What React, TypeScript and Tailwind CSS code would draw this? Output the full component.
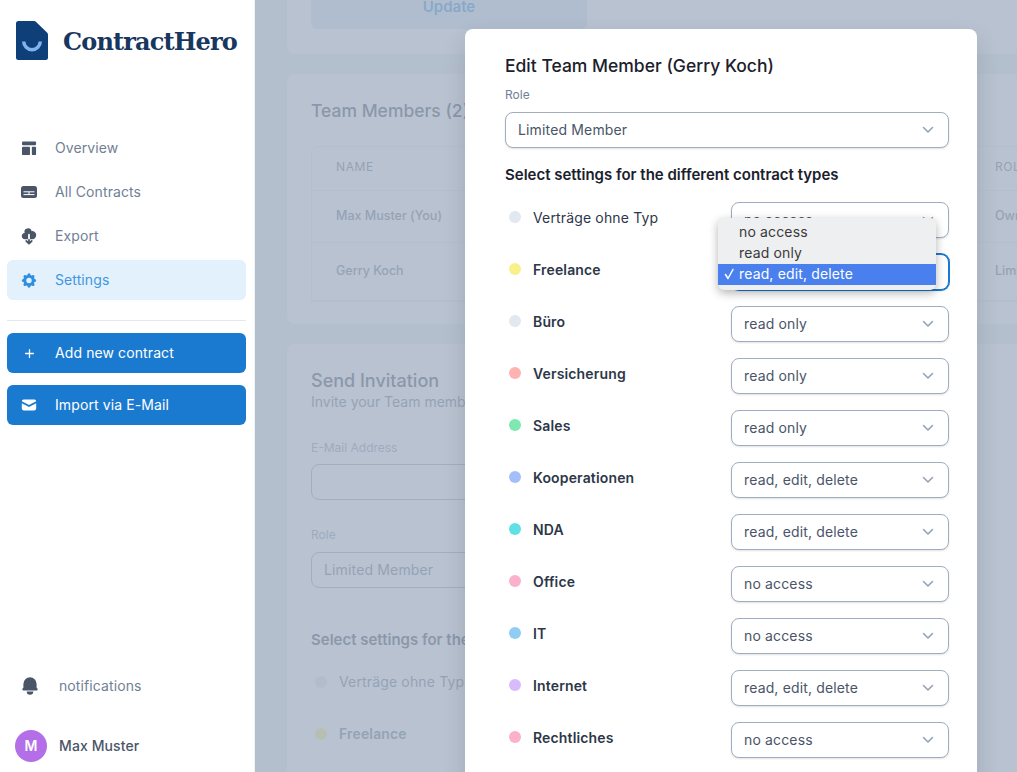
import { HiBell, HiCloudDownload, HiCog, HiMail, HiPlus } from "react-icons/hi";

const font = "font-['Inter',sans-serif]";

function Chevron() {
  return (
    <svg viewBox="0 0 20 20" className="w-[20px] h-[20px] text-[#94a3b8]" fill="none" stroke="currentColor" strokeWidth="1.6" strokeLinecap="round" strokeLinejoin="round">
      <path d="M5.5 7.5L10 12l4.5-4.5" />
    </svg>
  );
}

function Select({ value, focused, w }: { value: string; focused?: boolean; w?: boolean }) {
  return (
    <div
      className={
        "h-9 flex items-center justify-between pl-[12px] pr-[10px] rounded-lg bg-white text-sm tracking-[0.15px] text-[#4a5568] shadow-[0_1px_2px_rgba(0,0,0,0.12)] border overflow-hidden " +
        (focused ? "border-[#1a7ad0] ring-1 ring-[#1a7ad0] " : "border-[#a0aec0] ") +
        (w ? "w-full" : "w-[218px]")
      }
    >
      <span>{value}</span>
      <Chevron />
    </div>
  );
}

const rows: [string, string, string][] = [
  ["Verträge ohne Typ", "bg-[#e2e8f0]", "no access"],
  ["Freelance", "bg-[#faf089]", "read, edit, delete"],
  ["Büro", "bg-[#e2e8f0]", "read only"],
  ["Versicherung", "bg-[#feb2b2]", "read only"],
  ["Sales", "bg-[#7ee8b0]", "read only"],
  ["Kooperationen", "bg-[#a3bffa]", "read, edit, delete"],
  ["NDA", "bg-[#5fe0e6]", "read, edit, delete"],
  ["Office", "bg-[#fbb0cc]", "no access"],
  ["IT", "bg-[#90cdf4]", "no access"],
  ["Internet", "bg-[#d6bcfa]", "read, edit, delete"],
  ["Rechtliches", "bg-[#fbb0cc]", "no access"],
];

function NativeMenu() {
  return (
    <div className="absolute left-[-13px] top-[-36px] w-[218px] h-[72px] z-10 rounded-md bg-[#eeeff0] shadow-[0_3px_10px_rgba(0,0,0,0.3)] pt-1 text-sm text-[#3a3a3a] tracking-[0.15px] flex flex-col">
      <div className="h-[21px] pl-[21px] leading-[20px]">no access</div>
      <div className="h-[21px] pl-[21px] leading-[20px]">read only</div>
      <div className="h-[21px] pl-[21px] leading-[20px] bg-[#4a80ee] text-white relative">
        <svg viewBox="0 0 12 12" className="absolute left-[5px] top-[4px] w-[12px] h-[12px]" fill="none" stroke="#fff" strokeWidth="1.5" strokeLinecap="round" strokeLinejoin="round">
          <path d="M2.5 6.5L5 10.5 10 1.5" />
        </svg>
        read, edit, delete
      </div>
    </div>
  );
}

function NavItem({ icon, label, active }: { icon: React.ReactNode; label: string; active?: boolean }) {
  return (
    <div className={"h-10 flex items-center rounded-md pl-[13px] text-sm " + (active ? "bg-[#e3f1fd] text-[#3f97e0]" : "text-[#718096]")}>
      <span className={"w-[18px] h-[18px] flex items-center justify-center mr-[17px] " + (active ? "text-[#2f8fdf]" : "text-[#4a5568]")}>{icon}</span>
      {label}
    </div>
  );
}

function BlueButton({ icon, label }: { icon: React.ReactNode; label: string }) {
  return (
    <div className="h-10 flex items-center rounded-md pl-[13px] text-sm bg-[#1a7ad0] text-white">
      <span className="w-[18px] h-[18px] flex items-center justify-center mr-[17px]">{icon}</span>
      {label}
    </div>
  );
}

export default function App() {
  return (
    <div className={"h-screen w-full overflow-hidden flex bg-white " + font}>
      <aside className="w-[255px] shrink-0 flex flex-col bg-white border-r border-[#edf2f7] pl-[7px] pr-[8px] tracking-[0.1px]">
        <div className="h-[128px] flex items-start pl-[9px] pt-[21px] shrink-0">
          <svg viewBox="0 0 32 39" className="w-[32px] h-[39px] shrink-0">
            <path d="M2.5 0h15.5a3 3 0 0 1 2.1.9L31 11.5a3 3 0 0 1 1 2.2V36.5a2.5 2.5 0 0 1-2.5 2.5H2.5a2.5 2.5 0 0 1-2.5-2.5V2.5a2.5 2.5 0 0 1 2.5-2.5z" fill="#0f3f78" />
            <path d="M7.75 20.5a8.25 8.25 0 0 0 16.5 0" fill="none" stroke="#7fb4ee" strokeWidth="3.5" strokeLinecap="butt" />
          </svg>
          <span className="ml-[15px] mt-[4px] text-[24px] leading-[34px] font-bold text-[#17375f] tracking-[-0.85px] font-['DejaVu_Serif',serif]">ContractHero</span>
        </div>
        <nav className="flex flex-col gap-1">
          <NavItem
            label="Overview"
            icon={
              <svg viewBox="0 0 16 16" className="w-[15px] h-[15px]" fill="currentColor">
                <rect x="0" y="0.5" width="15" height="4" rx="1" />
                <rect x="0" y="6" width="8.5" height="9" rx="1" />
                <rect x="10.5" y="6" width="4.5" height="9" rx="1" />
              </svg>
            }
          />
          <NavItem
            label="All Contracts"
            icon={
              <svg viewBox="0 0 16 12" className="w-[16px] h-[12px]">
                <rect width="16" height="12" rx="2.5" fill="currentColor" />
                <path d="M2.5 5.8h11M2.5 8.6h11M8 5.8v2.8" stroke="#fff" strokeWidth="1" fill="none" />
              </svg>
            }
          />
          <NavItem label="Export" icon={<HiCloudDownload size={19} />} />
          <NavItem label="Settings" active icon={<HiCog size={19} />} />
        </nav>
        <div className="h-px bg-[#e2e8f0] mt-5 mb-3" />
        <div className="flex flex-col gap-3">
          <BlueButton label="Add new contract" icon={<HiPlus size={13} />} />
          <BlueButton label="Import via E-Mail" icon={<HiMail size={20} />} />
        </div>
        <div className="mt-auto flex items-center h-6 text-sm text-[#718096] pl-[13px] mb-[32px]">
          <HiBell size={22} className="text-[#4a5568] mr-[18px] ml-[-1px]" />
          notifications
        </div>
        <div className="flex items-center pl-2 mb-[10px] text-sm text-[#4a5568] font-medium">
          <div className="w-8 h-8 rounded-full bg-[#b46ee8] text-white flex items-center justify-center text-sm font-semibold mr-3">M</div>
          Max Muster
        </div>
      </aside>

      <main className="relative flex-1 overflow-hidden bg-[#edf2f7] pl-8">
        <div className="w-[900px] flex flex-col">
          <section className="h-[54px] bg-white rounded-b-lg px-6 flex flex-col justify-end pb-[25px] overflow-hidden shrink-0">
            <div className="h-11 w-[276px] shrink-0 rounded-md bg-[#dcecfb] text-[#3f97e0] font-semibold text-[15px] flex items-center justify-center">Update</div>
          </section>

          <section className="mt-5 h-[250px] bg-white rounded-lg px-6 pt-[25px] shrink-0">
            <h2 className="text-[17.5px] text-[#4a5568] font-medium leading-6">Team Members (2)</h2>
            <div className="mt-[23px] border border-[#edf2f7] rounded-t-md text-[12.5px] text-[#718096]">
              <div className="h-[44px] flex items-center px-6 pb-[4px] text-xs tracking-wider border-b border-[#edf2f7]">
                <span className="w-[659px]">NAME</span><span>ROLE</span>
              </div>
              <div className="h-[52px] flex items-center px-6 border-b border-[#edf2f7] font-medium">
                <span className="w-[659px]">Max Muster (You)</span><span>Owner</span>
              </div>
              <div className="h-[58px] flex items-center px-6 border-b border-[#edf2f7] font-medium">
                <span className="w-[659px]">Gerry Koch</span><span>Limited</span>
              </div>
            </div>
          </section>

          <section className="mt-5 bg-white rounded-lg px-6 pt-[26px] h-[600px] shrink-0 text-[#4a5568]">
            <h2 className="text-lg font-medium leading-[22px]">Send Invitation</h2>
            <p className="text-sm text-[#718096] leading-5">Invite your Team members</p>
            <p className="mt-[28px] text-xs text-[#94a3b8]">E-Mail Address</p>
            <div className="mt-2 h-9 w-[400px] border border-[#a0aec0] rounded-lg" />
            <p className="mt-[27px] text-xs text-[#94a3b8]">Role</p>
            <div className="mt-[9px] h-9 w-[400px] border border-[#a0aec0] rounded-lg flex items-center pl-3 text-sm tracking-[0.15px] text-[#718096]">Limited Member</div>
            <p className="mt-[41px] text-[15px] font-semibold">Select settings for the different contract types</p>
            <div className="mt-[20px] flex items-center text-sm tracking-[0.15px] text-[#718096]">
              <span className="w-3 h-3 rounded-full bg-[#e2e8f0] ml-[4px] mr-[12px]" />Verträge ohne Typ
            </div>
            <div className="mt-[32px] flex items-center text-sm font-semibold tracking-[0.15px] text-[#718096]">
              <span className="w-3 h-3 rounded-full bg-[#faf089] ml-[4px] mr-[12px]" />Freelance
            </div>
          </section>
        </div>

        <div className="absolute inset-0 bg-[#a0aec0]/75 flex justify-end items-start pr-10 pt-[29px] overflow-hidden">
          <div className="w-[512px] shrink-0 bg-white rounded-lg pl-10 pr-7 pt-[23px] pb-10 shadow-[0_10px_25px_rgba(0,0,0,0.12)]">
            <h1 className="text-[17.5px] font-medium leading-7 text-[#1a202c]">Edit Team Member (Gerry Koch)</h1>
            <p className="mt-[7px] text-xs leading-4 text-[#718096]">Role</p>
            <div className="mt-[9px]"><Select value="Limited Member" w /></div>
            <p className="mt-[17px] text-[15px] leading-5 font-semibold text-[#1a202c]">Select settings for the different contract types</p>
            <div className="mt-[17px] flex flex-col gap-4">
              {rows.map(([name, dot, val], i) => (
                <div key={name} className="flex items-center justify-between">
                  <div className={"flex items-center text-sm tracking-[0.15px] text-[#2d3748] mt-[-4px] " + (i === 0 ? "" : "font-semibold")}>
                    <span className={"w-3 h-3 rounded-full ml-1 mr-3 mt-[-2px] " + dot} />
                    <span>{name}</span>
                  </div>
                  <div className="relative">
                    <Select value={val} focused={i === 1} />
                    {i === 1 && <NativeMenu />}
                  </div>
                </div>
              ))}
            </div>
          </div>
        </div>
      </main>
    </div>
  );
}
